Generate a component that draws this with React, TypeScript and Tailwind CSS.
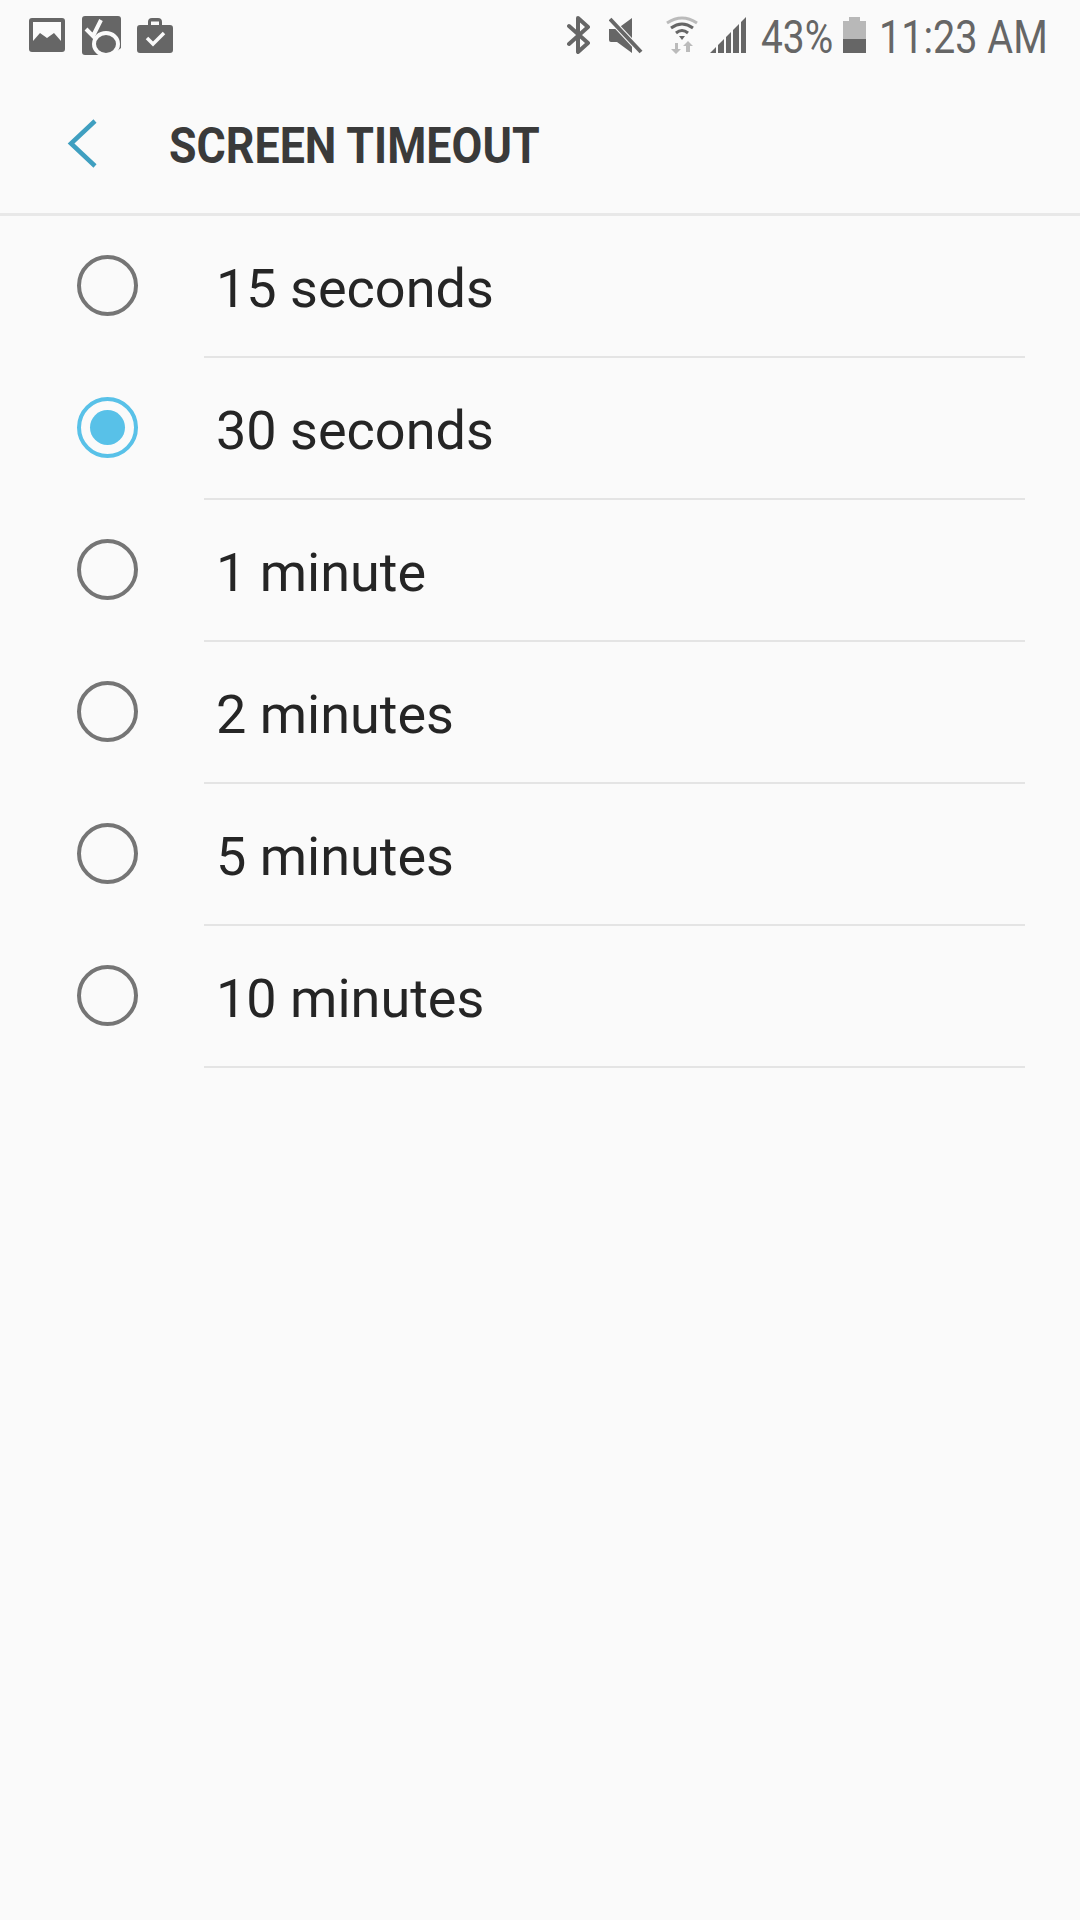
const options = ["15 seconds", "30 seconds", "1 minute", "2 minutes", "5 minutes", "10 minutes"];

const GalleryIcon = () => (
  <svg width="36" height="34" viewBox="0 0 36 34" className="ml-[29px]">
    <rect width="36" height="34" rx="3" fill="#666" />
    <path d="M4 4H32V23L25 15L18 20L11 15L4 23Z" fill="#fafafa" />
  </svg>
);

const AppIcon = () => (
  <svg width="39" height="39" viewBox="0 0 39 39" className="ml-[17px]">
    <rect width="39" height="39" rx="3" fill="#666" />
    <path d="M4 13L11 20L19 4" fill="none" stroke="#fafafa" strokeWidth="4" />
    <ellipse cx="24" cy="28" rx="12" ry="11" fill="#666" stroke="#fafafa" strokeWidth="4" />
    <path d="M30 39H39V32Z" fill="#fafafa" />
  </svg>
);

const BriefcaseIcon = () => (
  <svg width="36" height="35" viewBox="0 0 36 35" className="ml-[16px]">
    <path d="M3 7H11V4Q11 0 15 0H21Q25 0 25 4V7H33Q36 7 36 10V32Q36 35 33 35H3Q0 35 0 32V10Q0 7 3 7Z" fill="#666" />
    <rect x="14" y="3.5" width="8" height="3.5" fill="#fafafa" />
    <path d="M10 20L16 26L27 15" fill="none" stroke="#fafafa" strokeWidth="3.5" />
  </svg>
);

const BluetoothIcon = () => (
  <svg width="24" height="38" viewBox="0 0 24 38" className="ml-[394px]">
    <path d="M2 10L21 27L11 36V2L21 11L2 28" fill="none" stroke="#666" strokeWidth="4" strokeLinejoin="round" strokeLinecap="round" />
  </svg>
);

const MuteIcon = () => (
  <svg width="34" height="37" viewBox="0 0 34 37" className="ml-[18px]">
    <path d="M0 12H8L23 1V36L8 25H2Q0 25 0 23Z" fill="#666" />
    <path d="M1 2L32 35" stroke="#fafafa" strokeWidth="6" />
    <path d="M1 2L32 35" stroke="#666" strokeWidth="4" />
  </svg>
);

const WifiIcon = () => (
  <svg width="32" height="38" viewBox="0 0 32 38" className="ml-[23px]">
    <path d="M1 7Q16 -3 31 7" fill="none" stroke="#bbb" strokeWidth="3" />
    <path d="M5 12Q16 4 27 12" fill="none" stroke="#666" strokeWidth="3" />
    <path d="M10 17Q16 12 22 17" fill="none" stroke="#666" strokeWidth="3" />
    <path d="M13 20H19L16 24Z" fill="#666" />
    <path d="M9 27V33H5L10 38L15 33H12V27Z" fill="#bbb" />
    <path d="M20 36V30H17L22 25L27 30H24V36Z" fill="#bbb" />
  </svg>
);

const SignalIcon = () => (
  <svg width="36" height="36" viewBox="0 0 36 36" className="ml-[12px]">
    <path d="M0 36L6 30V36Z M8 28L14 22V36H8Z M16 20L21 15V36H16Z M23 13L29 7V36H23Z M31 5L36 0V36H31Z" fill="#666" />
  </svg>
);

const BatteryIcon = () => (
  <svg width="23" height="36" viewBox="0 0 23 36" className="ml-[7px]">
    <path d="M0 4H6V0H17V4H23V22H0Z" fill="#b8b8b8" />
    <rect y="22" width="23" height="14" fill="#666" />
  </svg>
);

const Radio = ({checked}: {checked: boolean}) => (
  <div className={`flex h-[61px] w-[61px] items-center justify-center rounded-full border-4 ${checked ? "border-[#58c1e8]" : "border-[#757575]"}`}>
    {checked && <div className="h-[35px] w-[35px] shrink-0 rounded-full bg-[#58c1e8]" />}
  </div>
);

export default function App() {
  return (
    <div className="h-[1920px] w-[1080px] overflow-hidden bg-[#fafafa] font-['Roboto',sans-serif]">
      {/* status bar */}
      <div className="flex h-[70px] items-center">
        <GalleryIcon />
        <AppIcon />
        <BriefcaseIcon />
        <BluetoothIcon />
        <MuteIcon />
        <WifiIcon />
        <SignalIcon />
        <span className="ml-[15px] mt-[4px] w-[75px] origin-left scale-x-[0.845] whitespace-nowrap text-[46px] leading-none text-[#666]">43%</span>
        <BatteryIcon />
        <span className="ml-[13px] mt-[4px] origin-left scale-x-[0.86] whitespace-nowrap text-[46px] leading-none text-[#666]">11:23 AM</span>
      </div>

      {/* header */}
      <div className="flex h-[146px] items-center border-b-[3px] border-[#e8e8e8]">
        <svg width="30" height="50" viewBox="0 0 30 50" className="ml-[67px] mt-[5px]">
          <path d="M28 2L4 24.500L28 47" fill="none" stroke="#3f9fc0" strokeWidth="4.500" />
        </svg>
        <h1 className="ml-[72px] mt-[9px] origin-left scale-x-[0.895] whitespace-nowrap text-[50px] font-bold leading-none text-[#3a3a3a]">SCREEN TIMEOUT</h1>
      </div>

      {/* options */}
      <div>
        {options.map((label, i) => (
          <div key={label} className="flex h-[142px] items-stretch">
            <div className="flex w-[204px] items-center pb-[3px] pl-[77px]">
              <Radio checked={i === 1} />
            </div>
            <div className="mr-[55px] flex flex-1 items-center border-b-2 border-[#e4e4e4] pl-[12px] pt-[5px]">
              <span className="text-[54px] leading-none text-[#252525]">{label}</span>
            </div>
          </div>
        ))}
      </div>
    </div>
  );
}
